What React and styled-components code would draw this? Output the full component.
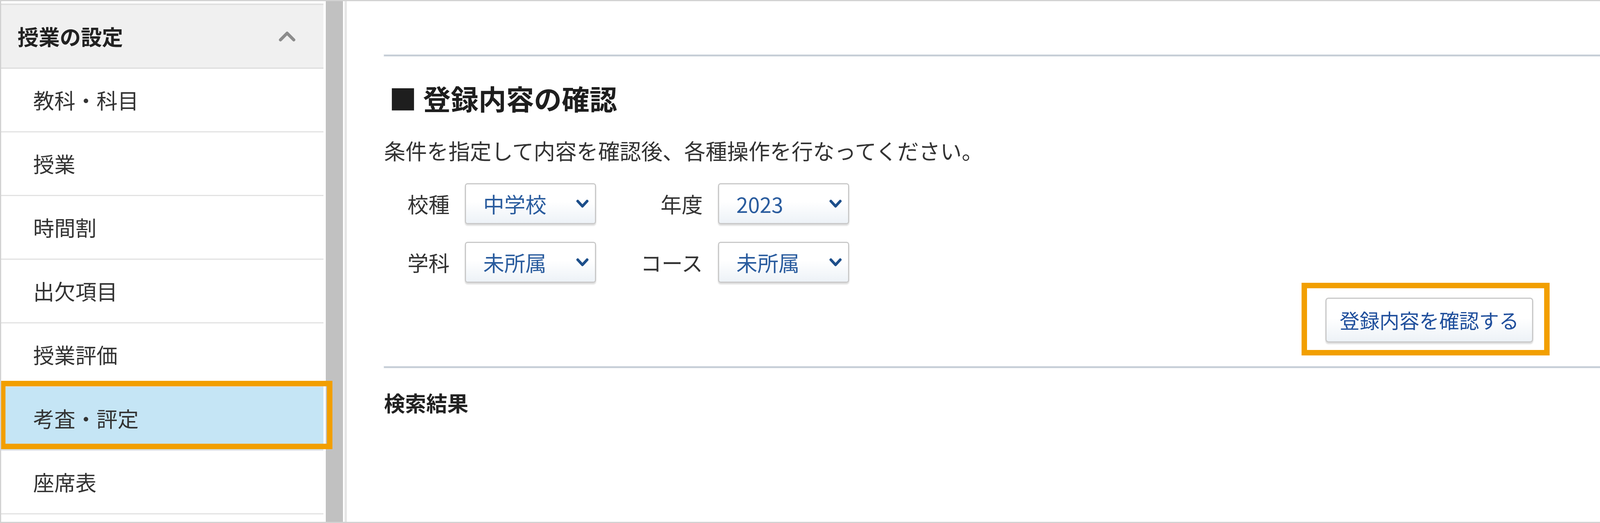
import React, { useState } from 'react'
import styled, { createGlobalStyle } from 'styled-components'

const GlobalStyle = createGlobalStyle`
    html, body {
        margin: 0;
        padding: 0;
        background: #ffffff;
    }
    body {
        font-family: "Noto Sans CJK JP", "Noto Sans", sans-serif;
        color: #333333;
    }
    * {
        box-sizing: border-box;
    }
`

const Frame = styled.div`
    display: flex;
    width: 4225px;
    height: 1339px;
    border: 3px solid #d2d2d2;
    background: #ffffff;
    overflow: hidden;
`

const Sidebar = styled.aside`
    display: flex;
    flex: 0 0 auto;
    height: 100%;
`

const NavList = styled.nav`
    width: 825px;
    padding-top: 6px;
    display: flex;
    flex-direction: column;
`

const NavHeader = styled.div`
    display: flex;
    align-items: center;
    justify-content: space-between;
    height: 167px;
    padding: 0 71px 0 42px;
    background: #f0f0f0;
    border-top: 4px solid #e0e0e0;
    border-bottom: 3px solid #dcdcdc;
    font-size: 54px;
    line-height: 1;
    font-weight: 700;
    color: #222222;
`

const NavItem = styled.div`
    position: relative;
    display: flex;
    align-items: center;
    height: 163px;
    padding-left: 82px;
    border-bottom: 3px solid #e2e2e2;
    font-size: 54px;
    line-height: 1;
    color: #333333;
    background: ${props => props.active ? '#c5e5f5' : '#ffffff'};
    z-index: ${props => props.active ? 2 : 1};

    ${props => props.active && `
        &::after {
            content: '';
            position: absolute;
            top: -16px;
            left: -3px;
            right: -23px;
            bottom: 1px;
            border: 14px solid #f29f00;
            pointer-events: none;
        }
    `}
`

const ScrollTrack = styled.div`
    width: 44px;
    height: 100%;
    margin-left: 6px;
    margin-right: 4px;
    background: #c1c1c1;
`

const Main = styled.main`
    flex: 1;
    height: 100%;
    border-left: 6px solid #e6e6e6;
    padding: 137px 3px 0 95px;
`

const Rule = styled.div`
    height: 4px;
    margin-top: ${props => props.gap || 0}px;
    background: #c5cdd6;
    box-shadow: 0 0 1px 1px #eef1f4;
`

const Heading = styled.h2`
    margin: 71px 0 0;
    padding-left: 13px;
    font-size: 71px;
    line-height: 1;
    font-weight: 700;
    color: #1e1e1e;
`

const Lead = styled.p`
    margin: 71px 0 0;
    font-size: 55px;
    line-height: 1;
    color: #333333;
`

const FilterGrid = styled.div`
    display: grid;
    grid-template-columns: 168px 336px 234px 336px;
    column-gap: 39px;
    row-gap: 45px;
    align-items: center;
    margin-top: 57px;
`

const FieldLabel = styled.label`
    text-align: right;
    font-size: 54px;
    line-height: 1;
    color: #333333;
`

const SelectBox = styled.div`
    display: flex;
    align-items: center;
    justify-content: space-between;
    height: 105px;
    padding: 0 16px 0 44px;
    border: 3px solid #c9c9c9;
    border-radius: 7px;
    background: linear-gradient(#ffffff 45%, #edf2f7);
    box-shadow: 0 4px 3px rgba(0, 0, 0, 0.13);
    font-size: 54px;
    line-height: 1;
    color: #2a5c9e;
    cursor: pointer;
`

const ButtonRow = styled.div`
    display: flex;
    justify-content: flex-end;
    padding-right: 252px;
`

const Highlight = styled.div`
    border: 14px solid #f29f00;
    padding: 24px 28px 19px 47px;
`

const Button = styled.button`
    display: flex;
    align-items: center;
    justify-content: center;
    width: 532px;
    height: 115px;
    border: 3px solid #c9c9c9;
    border-radius: 8px;
    background: linear-gradient(#ffffff 45%, #edf2f7);
    box-shadow: 0 4px 3px rgba(0, 0, 0, 0.13);
    font-family: "Noto Sans CJK JP", sans-serif;
    font-size: 51px;
    line-height: 1;
    color: #204f9c;
    cursor: pointer;
`

const ResultTitle = styled.h3`
    margin: 62px 0 0;
    font-size: 54px;
    line-height: 1;
    font-weight: 700;
    color: #222222;
`

const ChevronUp = () => (
    <svg width="44" height="28" viewBox="0 0 44 28">
        <polyline points="5,23 22,6 39,23" fill="none" stroke="#8c8c8c" strokeWidth="8" strokeLinecap="round" strokeLinejoin="round" />
    </svg>
)

const ChevronDown = () => (
    <svg width="32" height="22" viewBox="0 0 32 22">
        <polyline points="4,4 16,17 28,4" fill="none" stroke="#1c4e8a" strokeWidth="7" strokeLinecap="round" strokeLinejoin="round" />
    </svg>
)

const menu = ['教科・科目', '授業', '時間割', '出欠項目', '授業評価', '考査・評定', '座席表']

const filters = [
    { label: '校種', value: '中学校' },
    { label: '年度', value: '2023' },
    { label: '学科', value: '未所属' },
    { label: 'コース', value: '未所属' },
]

function App () {
    const [active, setActive] = useState('考査・評定')

    return (
        <>
            <GlobalStyle />
            <Frame>
                <Sidebar>
                    <NavList>
                        <NavHeader>
                            <span>授業の設定</span>
                            <ChevronUp />
                        </NavHeader>
                        {menu.map(item => (
                            <NavItem key={item} active={item === active} onClick={() => setActive(item)}>
                                {item}
                            </NavItem>
                        ))}
                    </NavList>
                    <ScrollTrack />
                </Sidebar>
                <Main>
                    <Rule />
                    <Heading>■ 登録内容の確認</Heading>
                    <Lead>条件を指定して内容を確認後、各種操作を行なってください。</Lead>
                    <FilterGrid>
                        {filters.map(f => (
                            <React.Fragment key={f.label}>
                                <FieldLabel>{f.label}</FieldLabel>
                                <SelectBox>
                                    <span>{f.value}</span>
                                    <ChevronDown />
                                </SelectBox>
                            </React.Fragment>
                        ))}
                    </FilterGrid>
                    <ButtonRow>
                        <Highlight>
                            <Button>登録内容を確認する</Button>
                        </Highlight>
                    </ButtonRow>
                    <Rule gap={28} />
                    <ResultTitle>検索結果</ResultTitle>
                </Main>
            </Frame>
        </>
    )
}

export default App
